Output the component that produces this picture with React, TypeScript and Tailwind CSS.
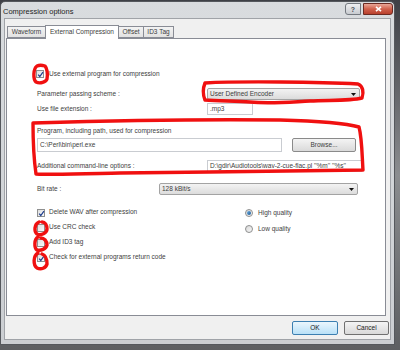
import React, { FC, ReactNode } from 'react'

const Check: FC<{ checked?: boolean }> = ({ checked }) => (
  <div className="w-[8px] h-[8px] border border-[#8e8f8f] bg-gradient-to-br from-[#dedede] to-[#fbfbfb] grid place-items-center shrink-0">
    {checked && (
      <svg width="7" height="7" viewBox="0 0 8 8">
        <path d="M1.3 4.2 L3.2 6.3 L6.8 1.4" fill="none" stroke="#1f3f8f" strokeWidth="1.4" />
      </svg>
    )}
  </div>
)

const Radio: FC<{ checked?: boolean }> = ({ checked }) => (
  <div className="w-[8px] h-[8px] rounded-full border border-[#8e8f8f] bg-gradient-to-br from-[#d8d8d8] to-[#f8f8f8] grid place-items-center shrink-0">
    {checked && <div className="w-[4px] h-[4px] rounded-full bg-gradient-to-br from-[#6fb3e6] to-[#14528f]" />}
  </div>
)

const Arrow = () => (
  <svg width="5" height="3" viewBox="0 0 5 3" className="shrink-0">
    <path d="M0 0 L5 0 L2.5 3 Z" fill="#111" />
  </svg>
)

const Select: FC<{ text: string; w: string }> = ({ text, w }) => (
  <div className={`${w} h-[12px] border border-[#a3a3a3] rounded-[2px] bg-gradient-to-b from-[#f3f3f3] to-[#dcdcdc] flex items-center justify-between pl-[2px] pr-[3px]`}>
    <span>{text}</span>
    <Arrow />
  </div>
)

const Input: FC<{ text: string; w: string; h?: string }> = ({ text, w, h = 'h-[12px]' }) => (
  <div className={`${w} ${h} border border-[#c9ccd1] bg-white flex items-center pl-[2px] whitespace-nowrap overflow-hidden`}>
    {text}
  </div>
)

const Row: FC<{ cls: string; children: ReactNode }> = ({ cls, children }) => (
  <div className={`flex items-center ${cls}`}>{children}</div>
)

const Tab: FC<{ label: string; w: string; active?: boolean }> = ({ label, w, active }) =>
  active ? (
    <div className={`${w} h-[14px] -ml-px -mb-px z-10 border border-b-0 border-[#898c95] bg-white flex items-center justify-center`}>{label}</div>
  ) : (
    <div className={`${w} h-[12px] -ml-px border border-[#898c95] bg-gradient-to-b from-[#f3f3f3] to-[#e2e2e2] flex items-center justify-center`}>{label}</div>
  )

const App: FC = () => {
  return (
    <div className="relative w-[400px] h-[350px] overflow-hidden bg-gradient-to-b from-[#3e4046] via-[#8b8d90] to-[#5d5f62] font-['Liberation_Sans',Arial,sans-serif] text-[6.5px] text-[#404040] leading-none">
      <div className="mt-px w-[395px] h-[344px] bg-gradient-to-b from-[#d9dcdf] to-[#cbced2] border border-[#55585d] rounded-t-[5px] flex flex-col">
        {/* title bar */}
        <div className="h-[16px] flex items-start justify-between pl-[2px]">
          <span className="mt-[6px] text-[7.5px] text-[#1e1e1e]">Compression options</span>
          <div className="flex mt-px">
            <div className="w-[16px] h-[12px] rounded-l-[3px] border border-[#73787f] bg-gradient-to-b from-[#eeeff1] to-[#c8cbd0] grid place-items-center text-[7px] font-bold text-[#4a4f57]">?</div>
            <div className="w-[30px] h-[12px] ml-[2px] mr-px rounded-r-[3px] border border-[#6b2a22] bg-gradient-to-b from-[#e9a697] via-[#d0604c] to-[#b8402d] grid place-items-center">
              <svg width="7" height="6" viewBox="0 0 7 6">
                <path d="M1 0.8 L6 5.2 M6 0.8 L1 5.2" stroke="#fff" strokeWidth="1.6" />
              </svg>
            </div>
          </div>
        </div>

        {/* body */}
        <div className="ml-[3px] mr-[3px] h-[322px] bg-[#f0f0f0] border border-[#a0a3a8] flex flex-col">
          <div className="flex items-end pl-[3px] pt-[6px]">
            <Tab label="Waveform" w="w-[39px]" />
            <Tab label="External Compression" w="w-[74px]" active />
            <Tab label="Offset" w="w-[26px]" />
            <Tab label="ID3 Tag" w="w-[31px]" />
          </div>

          <div className="ml-px w-[380px] h-[278px] bg-white border border-[#898c95] flex flex-col pl-[30px]">
            <Row cls="mt-[29px] h-[12px] -ml-px gap-[5px]">
              <Check checked />
              <span>Use external program for compression</span>
            </Row>
            <Row cls="mt-[8px] h-[12px]">
              <span className="w-[170px]">Parameter passing scheme :</span>
              <Select text="User Defined Encoder" w="w-[153px]" />
            </Row>
            <Row cls="mt-[3px] h-[12px]">
              <span className="w-[170px]">Use file extension :</span>
              <Input text=".mp3" w="w-[46px]" />
            </Row>
            <Row cls="mt-[11px] h-[10px]">
              <span>Program, including path, used for compression</span>
            </Row>
            <Row cls="mt-[2px] h-[14px] gap-[10px]">
              <Input text="C:\Perl\bin\perl.exe" w="w-[245px]" h="h-[14px]" />
              <div className="w-[64px] h-[14px] border border-[#8a8a8a] rounded-[2px] bg-gradient-to-b from-[#f4f4f4] to-[#dadada] grid place-items-center">Browse...</div>
            </Row>
            <Row cls="mt-[8px] h-[12px]">
              <span className="w-[170px]">Additional command-line options :</span>
              <Input text={"D:\\gdir\\Audiotools\\wav-2-cue-flac.pl ''%m'' ''%s''"} w="w-[155px]" />
            </Row>
            <Row cls="mt-[11px] h-[12px]">
              <span className="w-[122px]">Bit rate :</span>
              <Select text="128 kBit/s" w="w-[199px]" />
            </Row>
            <div className="mt-[10px] flex">
              <div className="w-[208px] flex flex-col">
                {[
                  ['Delete WAV after compression', true],
                  ['Use CRC check', false],
                  ['Add ID3 tag', false],
                  ['Check for external programs return code', true],
                ].map(([label, on]) => (
                  <Row key={label as string} cls="h-[15px] gap-[4px]">
                    <Check checked={on as boolean} />
                    <span>{label as string}</span>
                  </Row>
                ))}
              </div>
              <div className="flex flex-col">
                <Row cls="h-[16px] gap-[5px]">
                  <Radio checked />
                  <span>High quality</span>
                </Row>
                <Row cls="h-[16px] gap-[5px]">
                  <Radio />
                  <span>Low quality</span>
                </Row>
              </div>
            </div>
          </div>

          <div className="mt-[5px] flex justify-end gap-[6px] pr-[1px]">
            <div className="w-[46px] h-[14px] border border-[#3c7fb1] rounded-[2px] bg-gradient-to-b from-[#eaf6fd] to-[#b9e1f8] grid place-items-center text-[#1a1a1a]">OK</div>
            <div className="w-[45px] h-[14px] border border-[#707070] rounded-[2px] bg-gradient-to-b from-[#f4f4f4] to-[#d9d9d9] grid place-items-center text-[#1a1a1a]">Cancel</div>
          </div>
        </div>
      </div>

      {/* red hand-drawn marks */}
      <svg className="absolute inset-0 pointer-events-none" width="400" height="350" viewBox="0 0 400 350">
        <g fill="none" stroke="#f01010" strokeWidth="3.4" strokeLinejoin="round" strokeLinecap="round">
          <path d="M37 66 C33 69 33 79 36 82 C40 84 46 82 47 79 C48 74 47 68 45 66 C42 65 39 65 37 66 Z" />
          <path d="M205 83 C240 81 320 82 358 84 C363 86 364 92 362 98 C350 101 330 100 310 101 C290 102 270 104 250 102 C235 101 218 101 205 100 C203 95 203 88 205 83 Z" />
          <path d="M33 123 C100 121 200 119 280 120 C320 121 345 123 359 127 C362 138 362 155 363 170 C300 171 200 172 120 173 C80 174 55 175 36 174 C34 160 33 140 33 123 Z" />
          <path d="M39 222 C34 224 34 232 37 234 C41 236 47 233 47 229 C47 225 45 222 42 222" />
          <path d="M38 237 C34 239 34 248 37 250 C41 251 46 249 47 245 C47 241 44 238 41 238" />
          <path d="M38 253 C33 256 33 265 37 268 C41 270 46 268 47 264 C47 259 45 255 42 254" />
        </g>
      </svg>
    </div>
  )
}

export default App
